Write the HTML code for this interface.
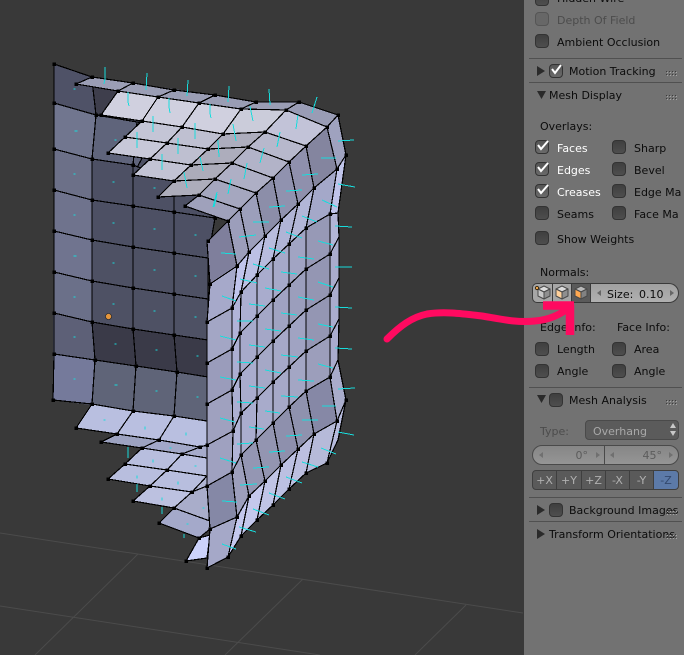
<!DOCTYPE html>
<html><head><meta charset="utf-8"><style>
html,body{margin:0;padding:0;background:#393939}
#r{position:relative;width:684px;height:655px;overflow:hidden;background:#393939;font-family:"DejaVu Sans",sans-serif;font-size:11px;color:#000}
#p{position:absolute;left:524px;top:0;width:160px;height:655px;background:#727272}
.t{position:absolute;line-height:14px;height:14px;white-space:nowrap;margin-top:1px;color:#0c0c0c}
.t.w{color:#fff}.t.d{color:#4c4c4c}
.c{position:absolute;width:12px;height:12px;border:1px solid #333;border-radius:4px;background:linear-gradient(#3f3f3f,#4e4e4e)}
.c.o{background:linear-gradient(#555,#6a6a6a)}
.c.x{background:#676767;border-color:#555}
.s{position:absolute;left:529px;width:153px;height:1px;background:#505050}
svg{position:absolute;left:0;top:0}
.b{position:absolute;box-sizing:border-box;text-align:center;line-height:19px;height:20px;top:470px;background:#5a5a5a;color:#b0b0b0;border:1px solid #3f3f3f}
</style></head><body><div id="r">
<svg width="684" height="655" viewBox="0 0 684 655">
<g stroke="#4b4b4b" fill="none" stroke-width="1">
<path d="M0 533L523 613M0 606L320 655M138 554L35 655M303 579L225 655M466 605L415 655"/>
</g>
<g shape-rendering="crispEdges" stroke="#000" stroke-width="1.200" stroke-linejoin="round">
<polygon fill="#4d5064" stroke="none" points="54,64 92,77 215,95 215,218 208,241 207,421 53,400"/>
<polygon fill="#4f5267" points="54,64 92,77 96,115 54,103"/>
<polygon fill="#3e3e4c" points="92,80 118,91 101,115 96,115"/>
<polygon fill="#71768f" points="54,103 96,115 92,159 54,149"/>
<polygon fill="#6c7088" points="54,149 92,159 92,200 54,190"/>
<polygon fill="#6f738d" points="54,190 92,200 92,240 54,231"/>
<polygon fill="#70748f" points="54,231 92,240 92,281 54,272"/>
<polygon fill="#6b7089" points="54,272 92,281 92,322 54,313"/>
<polygon fill="#5d6077" points="54,313 92,322 95,360 54,354"/>
<polygon fill="#757a9b" points="54,354 95,360 92,404 53,400"/>
<polygon fill="#5f647b" points="96,115 137,122 133,165 92,159"/>
<polygon fill="#5f647b" points="137,122 160,125 133,175 133,165"/>
<polygon fill="#4d5064" points="92,159 133,165 133,206 92,200"/>
<polygon fill="#4d5064" points="133,165 174,181 174,212 133,206"/>
<polygon fill="#4d5064" points="174,181 215,179 215,218 174,212"/>
<polygon fill="#4d5064" points="92,200 133,206 133,247 92,240"/>
<polygon fill="#4d5064" points="133,206 174,212 174,253 133,247"/>
<polygon fill="#4d5064" points="174,212 215,218 208,258 174,253"/>
<polygon fill="#4e5164" points="92,240 133,247 133,288 92,281"/>
<polygon fill="#4e5164" points="133,247 174,253 174,294 133,288"/>
<polygon fill="#4e5164" points="174,253 208,258 208,299 174,294"/>
<polygon fill="#4e5164" points="92,281 133,288 133,329 92,322"/>
<polygon fill="#4e5164" points="133,288 174,294 174,335 133,329"/>
<polygon fill="#4e5164" points="174,294 208,299 208,340 174,335"/>
<polygon fill="#3a3a48" points="92,322 133,329 136,366 95,360"/>
<polygon fill="#3a3a48" points="133,329 174,335 177,372 136,366"/>
<polygon fill="#3a3a48" points="174,335 208,340 208,377 177,372"/>
<polygon fill="#5f6478" points="95,360 136,366 133,411 92,404"/>
<polygon fill="#5f6478" points="136,366 177,372 174,416 133,411"/>
<polygon fill="#5f6478" points="177,372 208,377 207,421 174,416"/>
<!-- top sheet -->
<polygon fill="#9b9eb5" points="76,84 92,77 133,83 118,91"/>
<polygon fill="#9b9eb5" points="118,91 133,83 174,90 158,97"/>
<polygon fill="#9a9db4" points="158,97 174,90 215,95 199,103"/>
<polygon fill="#9a9db4" points="199,103 215,95 256,102 241,109"/>
<polygon fill="#9a9db4" points="241,109 256,102 299,102 286,110"/>
<polygon fill="#999cb5" points="286,110 299,102 338,115 327,127"/>
<polygon fill="#d0d0df" points="101,115 118,91 158,97 142,121"/>
<polygon fill="#d0d0df" points="142,121 158,97 199,103 182,127"/>
<polygon fill="#d0d0df" points="182,127 199,103 241,109 223,134"/>
<polygon fill="#cbccda" points="223,134 241,109 286,110 265,132"/>
<polygon fill="#c2c3d8" points="265,132 286,110 327,127 306,146"/>
<polygon fill="#c4c5d6" points="125,137 142,121 182,127 167,143"/>
<polygon fill="#bfc0d1" points="167,143 182,127 223,134 208,149"/>
<polygon fill="#adadbd" points="208,149 223,134 265,132 248,147"/>
<polygon fill="#b7b8cc" points="248,147 265,132 306,146 289,162"/>
<polygon fill="#c7c8d8" points="108,153 125,137 167,143 150,159"/>
<polygon fill="#bebfd0" points="150,159 167,143 208,149 191,165"/>
<polygon fill="#adadbc" points="191,165 208,149 248,147 232,163"/>
<polygon fill="#b2b3c8" points="232,163 248,147 289,162 273,178"/>
<polygon fill="#c2c3d4" points="133,175 150,159 191,165 174,181"/>
<polygon fill="#acacba" points="174,181 191,165 232,163 215,179"/>
<polygon fill="#aeafc5" points="215,179 232,163 273,178 256,193"/>
<polygon fill="#adadbb" points="158,197 174,181 215,179 199,195"/>
<polygon fill="#a5a7bf" points="199,195 215,179 256,193 240,209"/>
<polygon fill="#9fa1bb" points="185,206 199,195 240,209 228,221"/>
<!-- bottom sheet -->
<polygon fill="#b9bfe0" points="92,404 133,411 117,434 76,428"/>
<polygon fill="#b9bfe0" points="133,411 174,416 159,440 117,434"/>
<polygon fill="#b9bfe0" points="174,416 207,421 207,445 200,447 159,440"/>
<polygon fill="#9da3c1" points="117,434 159,440 142,448 101,442"/>
<polygon fill="#a2a8c8" points="159,440 200,447 182,454 142,448"/>
<polygon fill="#a6abca" points="200,447 207,445 207,458 182,454"/>
<polygon fill="#b8bede" points="142,448 182,454 167,470 125,464"/>
<polygon fill="#b8bede" points="182,454 207,458 207,476 167,470"/>
<polygon fill="#b8bede" points="125,464 167,470 150,486 108,479"/>
<polygon fill="#b8bede" points="167,470 207,476 192,492 150,486"/>
<polygon fill="#b0b5d4" points="192,492 207,476 207,500"/>
<polygon fill="#bcc1e0" points="150,486 192,492 174,508 133,501"/>
<polygon fill="#a9adca" points="192,492 207,486 210,521 174,508"/>
<polygon fill="#a4a9ca" points="174,508 210,521 210,529 199,538 159,523"/>
<polygon fill="#ccd2fa" points="199,538 210,535 207,558 186,561"/>
<!-- side band 0 -->
<polygon fill="#9fa2bf" points="327,127 338,115 346,155 337,169"/>
<polygon fill="#84859f" points="306,146 327,127 337,169 314,188"/>
<polygon fill="#8f90ad" points="289,162 306,146 314,188 298,204"/>
<polygon fill="#9092af" points="273,178 289,162 298,204 281,220"/>
<polygon fill="#8c8ea9" points="256,193 273,178 281,220 265,236"/>
<polygon fill="#9c9fbb" points="240,209 256,193 265,236 249,252"/>
<polygon fill="#9c9ebb" points="228,221 240,209 249,252 237,266"/>
<polygon fill="#7f7f9c" points="207,242 228,221 237,266 210,284"/>
<!-- band 1 -->
<polygon fill="#c0c4ea" points="337,169 346,155 338,213 330,214"/>
<polygon fill="#a4a8c9" points="314,188 337,169 330,214 306,228"/>
<polygon fill="#b2b6d7" points="298,204 314,188 306,228 289,244"/>
<polygon fill="#b0b4d6" points="281,220 298,204 289,244 273,259"/>
<polygon fill="#b8bcde" points="265,236 281,220 273,259 257,275"/>
<polygon fill="#bcc0e4" points="249,252 265,236 257,275 241,292"/>
<polygon fill="#c0c4ec" points="237,266 249,252 241,292 232,308"/>
<polygon fill="#a6a9ca" points="210,284 237,266 232,308 207,322"/>
<!-- band 2 -->
<polygon fill="#b2b5d6" points="330,214 338,213 339,237 330,254"/>
<polygon fill="#9799b6" points="306,228 330,214 330,254 306,269"/>
<polygon fill="#a1a4c3" points="289,244 306,228 306,269 289,285"/>
<polygon fill="#a6a9c9" points="273,259 289,244 289,285 273,300"/>
<polygon fill="#a9accd" points="257,275 273,259 273,300 257,316"/>
<polygon fill="#acafd1" points="241,292 257,275 257,316 240,333"/>
<polygon fill="#b1b4d8" points="232,308 241,292 240,333 232,349"/>
<polygon fill="#a3a6c5" points="207,322 232,308 232,349 207,363"/>
<!-- band 3 -->
<polygon fill="#aaaccd" points="330,254 339,237 339,278 330,295"/>
<polygon fill="#9496b3" points="306,269 330,254 330,295 306,310"/>
<polygon fill="#9b9ebc" points="289,285 306,269 306,310 289,326"/>
<polygon fill="#a0a3c2" points="273,300 289,285 289,326 273,341"/>
<polygon fill="#a4a7c7" points="257,316 273,300 273,341 257,357"/>
<polygon fill="#a7aacb" points="240,333 257,316 257,357 240,374"/>
<polygon fill="#acafd2" points="232,349 240,333 240,374 232,390"/>
<polygon fill="#9a9cbb" points="207,363 232,349 232,390 207,404"/>
<!-- band 4 -->
<polygon fill="#aaaccd" points="330,295 339,278 339,319 330,336"/>
<polygon fill="#9496b3" points="306,310 330,295 330,336 306,351"/>
<polygon fill="#a0a3c2" points="289,326 306,310 306,351 289,367"/>
<polygon fill="#a6a9c8" points="273,341 289,326 289,367 273,382"/>
<polygon fill="#a5a8c7" points="257,357 273,341 273,382 257,398"/>
<polygon fill="#a9accd" points="240,374 257,357 257,398 241,413"/>
<polygon fill="#acafd2" points="232,390 240,374 241,413 233,431"/>
<polygon fill="#9fa1bf" points="207,404 232,390 233,431 207,445"/>
<!-- band 5 -->
<polygon fill="#aaaccd" points="330,336 339,319 338,360 330,377"/>
<polygon fill="#9c9ebb" points="306,351 330,336 330,377 306,391"/>
<polygon fill="#a3a6c4" points="289,367 306,351 306,391 289,407"/>
<polygon fill="#a6a9c8" points="273,382 289,367 289,407 273,423"/>
<polygon fill="#a8abcb" points="257,398 273,382 273,423 256,440"/>
<polygon fill="#aaadce" points="241,413 257,398 256,440 241,455"/>
<polygon fill="#b0b3d6" points="233,431 241,413 241,455 232,472"/>
<polygon fill="#9fa1c0" points="207,445 233,431 232,472 207,486"/>
<!-- band 6 -->
<polygon fill="#a9accb" points="330,377 338,360 346,400 337,421"/>
<polygon fill="#8688a6" points="306,391 330,377 337,421 314,434"/>
<polygon fill="#8f92ae" points="289,407 306,391 314,434 298,449"/>
<polygon fill="#8e90ad" points="273,423 289,407 298,449 281,465"/>
<polygon fill="#9395b1" points="256,440 273,423 281,465 265,481"/>
<polygon fill="#9496b3" points="241,455 256,440 265,481 249,496"/>
<polygon fill="#9d9fbc" points="232,472 241,455 249,496 237,517"/>
<polygon fill="#8588a6" points="207,486 232,472 237,517 210,529"/>
<!-- band 7 -->
<polygon fill="#b7bbdd" points="337,421 346,400 338,440 327,463"/>
<polygon fill="#b6bad9" points="314,434 337,421 327,463 306,473"/>
<polygon fill="#bcbfe0" points="298,449 314,434 306,473 289,489"/>
<polygon fill="#bcc0e2" points="281,465 298,449 289,489 273,505"/>
<polygon fill="#c0c4e6" points="265,481 281,465 273,505 257,520"/>
<polygon fill="#c4c8ec" points="249,496 265,481 257,520 241,536"/>
<polygon fill="#c4c8ee" points="237,517 249,496 241,536 228,557"/>
<polygon fill="#a5a8c8" points="210,529 237,517 228,557 207,568"/>
</g>
<!-- vertices -->
<path shape-rendering="crispEdges" stroke="#000" stroke-linecap="square" fill="none" style="stroke-width:3.500" d="M54 64h0M54 103h0M54 149h0M54 190h0M54 231h0M54 272h0M54 313h0M54 354h0M53 400h0M92 77h0M96 115h0M92 159h0M92 200h0M92 240h0M92 281h0M92 322h0M95 360h0M92 404h0M133 165h0M133 206h0M133 247h0M133 288h0M133 329h0M136 366h0M133 411h0M174 212h0M174 253h0M174 294h0M174 335h0M177 372h0M174 416h0M208 241h0M210 284h0M207 322h0M207 363h0M207 404h0M207 445h0M207 486h0M210 529h0M207 568h0M76 84h0M133 83h0M174 90h0M215 95h0M256 102h0M299 102h0M338 115h0M118 91h0M158 97h0M199 103h0M241 109h0M286 110h0M327 127h0M101 115h0M142 121h0M182 127h0M223 134h0M265 132h0M306 146h0M125 137h0M167 143h0M208 149h0M248 147h0M289 162h0M108 153h0M150 159h0M191 165h0M232 163h0M273 178h0M133 175h0M174 181h0M215 179h0M256 193h0M158 197h0M199 195h0M240 209h0M185 206h0M228 221h0M215 218h0M76 428h0M117 434h0M159 440h0M200 447h0M101 442h0M142 448h0M182 454h0M125 464h0M167 470h0M108 479h0M150 486h0M192 492h0M133 501h0M174 508h0M159 523h0M199 538h0M186 561h0M346 155h0M337 169h0M314 188h0M298 204h0M281 220h0M265 236h0M249 252h0M237 266h0M330 214h0M306 228h0M289 244h0M273 259h0M257 275h0M241 292h0M232 308h0M330 254h0M306 269h0M289 285h0M273 300h0M257 316h0M240 333h0M232 349h0M330 295h0M306 310h0M289 326h0M273 341h0M257 357h0M240 374h0M232 390h0M330 336h0M306 351h0M289 367h0M273 382h0M257 398h0M241 413h0M233 431h0M330 377h0M306 391h0M289 407h0M273 423h0M256 440h0M241 455h0M232 472h0M337 421h0M346 400h0M314 434h0M298 449h0M281 465h0M265 481h0M249 496h0M237 517h0M327 463h0M306 473h0M289 489h0M273 505h0M257 520h0M241 536h0M228 557h0"/>
<!-- normals -->
<path shape-rendering="crispEdges" stroke="#18dcdc" stroke-width="1" fill="none" d="M105 67V79L104 84M147 73L146 90M188 80L187 96M128 92V102L129 106M169 98V107L170 113M210 104V113L211 118M153 116V132M195 123V139M137 132V148M178 138V154M218 140L219 157M162 154V170M200 157L203 171M184 172L187 188M217 194L214 207M229 86L228 102M269 89L270 105M317 97L312 113M250 106L253 121M298 115L296 129M233 124L236 141M280 132L277 147M264 148L260 163M247 163L244 179M231 179L228 194M217 192L213 207M338 141L354 140M321 158H336M302 175L318 174M286 191L302 190M269 207L285 206M253 222H269M239 237L256 235M221 253L236 254M338 184L355 187M322 200L337 207M302 216L317 222M286 232L302 238M269 248L285 253M335 226L352 227M318 241L333 245M298 257L314 259M253 264L269 269M281 272L297 274M240 279L257 283M265 288L281 291M318 282L333 287M222 296L236 301M249 304L265 306M298 297L314 300M281 313L297 315M335 267H352M335 307L352 308M318 324L333 327M237 321H253M265 329L281 331M220 336L236 340M298 338L314 340M249 345L265 347M281 355L298 357M335 348L352 349M318 364L333 368M237 362L253 363M265 370L281 373M298 380L314 381M220 377L236 380M249 386L265 388M281 396L298 397M338 389L355 388M322 406H336M237 402L253 403M265 411L280 413M302 420H318M220 418L235 422M249 427L264 429M338 432L354 435M286 436L302 435M237 444L253 443M269 452L285 451M321 448L336 454M220 458L236 463M253 468L269 467M302 462L318 467M240 485L257 484M286 477L302 483M222 501L237 502M269 493L285 499M253 509L269 515M239 527L256 532M222 544L236 549M128 447V458M137 484V492M162 507V514M184 534V538"/>
<path shape-rendering="crispEdges" stroke="#18dcdc" stroke-linecap="square" fill="none" style="stroke-width:1" d="M74 89h1M75 131h2M74 174h1M74 215h1M113 182h1M113 223h1M154 188h1M154 229h1M115 140h1M74 256h2M74 297h1M74 337h1M74 379h1M113 263h1M113 304h1M154 270h1M154 311h1M195 235h1M195 276h1M195 317h1M115 344h1M156 350h1M197 356h1M115 385h2M156 391h1M197 397h1M104 420h1M145 427v2M186 433v2M170 448h1M153 460v2M195 466h1M137 476v2M178 482v2M162 498v2M203 508h1M187 524h1"/>
<!-- active vertex -->
<circle cx="108.500" cy="316.500" r="3" fill="#e6963c" stroke="#222" stroke-width=".6"/>
</svg>
<div id="p"></div>
<div class="c" style="left:535px;top:-8px"></div><div class="t" style="left:557px;top:-9px">Hidden Wire</div>
<div class="c x" style="left:535px;top:12px"></div><div class="t d" style="left:557px;top:13px">Depth Of Field</div>
<div class="c" style="left:535px;top:34px"></div><div class="t" style="left:557px;top:35px">Ambient Occlusion</div>
<div class="s" style="top:58px"></div>
<div class="c o" style="left:549px;top:64px"></div><div class="t" style="left:569px;top:64px">Motion Tracking</div>
<div class="s" style="top:82px"></div>
<div class="t" style="left:549px;top:88px">Mesh Display</div>
<div class="t" style="left:540px;top:119px">Overlays:</div>
<div class="c o" style="left:535px;top:140px"></div><div class="t w" style="left:557px;top:141px">Faces</div>
<div class="c o" style="left:535px;top:162px"></div><div class="t w" style="left:557px;top:163px">Edges</div>
<div class="c o" style="left:535px;top:184px"></div><div class="t w" style="left:557px;top:185px">Creases</div>
<div class="c" style="left:535px;top:206px"></div><div class="t" style="left:557px;top:207px">Seams</div>
<div class="c" style="left:612px;top:140px"></div><div class="t" style="left:634px;top:141px">Sharp</div>
<div class="c" style="left:612px;top:162px"></div><div class="t" style="left:634px;top:163px">Bevel</div>
<div class="c" style="left:612px;top:184px"></div><div class="t" style="left:634px;top:185px">Edge Ma</div>
<div class="c" style="left:612px;top:206px"></div><div class="t" style="left:634px;top:207px">Face Ma</div>
<div class="c" style="left:535px;top:231px"></div><div class="t" style="left:557px;top:232px">Show Weights</div>
<div class="t" style="left:540px;top:265px">Normals:</div>
<div style="position:absolute;left:532px;top:283px;width:20px;height:20px;box-sizing:border-box;border:1px solid #3a3a3a;border-right:0;border-radius:5px 0 0 5px;background:#a6a6a6"></div>
<div style="position:absolute;left:552px;top:283px;width:19px;height:20px;box-sizing:border-box;border:1px solid #3a3a3a;border-right:0;background:#a6a6a6"></div>
<div style="position:absolute;left:571px;top:283px;width:20px;height:20px;box-sizing:border-box;border:1px solid #3a3a3a;background:#5a5a5a"></div>
<div style="position:absolute;left:591px;top:283px;width:88px;height:20px;box-sizing:border-box;border:1px solid #3a3a3a;border-left:0;border-radius:0 10px 10px 0;background:linear-gradient(#a0a0a0,#b0b0b0)"></div>
<div class="t" style="left:607px;top:287px">Size:</div><div class="t" style="left:639px;top:287px">0.10</div>
<div class="t" style="left:540px;top:320px">Edge Info:</div><div class="t" style="left:617px;top:320px">Face Info:</div>
<div class="c" style="left:535px;top:342px"></div><div class="t" style="left:557px;top:342px">Length</div>
<div class="c" style="left:612px;top:342px"></div><div class="t" style="left:634px;top:342px">Area</div>
<div class="c" style="left:535px;top:364px"></div><div class="t" style="left:557px;top:364px">Angle</div>
<div class="c" style="left:612px;top:364px"></div><div class="t" style="left:634px;top:364px">Angle</div>
<div class="s" style="top:387px"></div>
<div class="c" style="left:549px;top:393px"></div><div class="t" style="left:569px;top:393px">Mesh Analysis</div>
<div class="t d" style="left:540px;top:424px">Type:</div>
<div style="position:absolute;left:585px;top:420px;width:94px;height:20px;box-sizing:border-box;border:1px solid #4a4a4a;border-radius:4px;background:#5b5b5b"></div>
<div class="t" style="left:593px;top:424px;color:#a8a8a8">Overhang</div>
<div style="position:absolute;left:532px;top:445px;width:147px;height:20px;box-sizing:border-box;border:1px solid #4a4a4a;border-radius:10px;background:linear-gradient(#868686,#959595)"></div>
<div style="position:absolute;left:604px;top:446px;width:1px;height:18px;background:#4a4a4a"></div>
<div class="t" style="left:568px;top:448px;color:#5c5c5c;width:20px;text-align:right">0°</div>
<div class="t" style="left:638px;top:448px;color:#5c5c5c;width:24px;text-align:right">45°</div>
<div class="b" style="left:532px;width:25px;border-radius:4px 0 0 4px">+X</div>
<div class="b" style="left:556px;width:26px">+Y</div>
<div class="b" style="left:581px;width:25px">+Z</div>
<div class="b" style="left:605px;width:25px">-X</div>
<div class="b" style="left:629px;width:25px">-Y</div>
<div class="b" style="left:653px;width:26px;border-radius:0 4px 4px 0;background:#5c7aa8;color:#33496d">-Z</div>
<div class="s" style="top:497px"></div>
<div class="c" style="left:549px;top:503px"></div><div class="t" style="left:569px;top:503px">Background Images</div>
<div class="s" style="top:521px"></div>
<div class="t" style="left:549px;top:527px">Transform Orientations</div>
<svg width="684" height="655" viewBox="0 0 684 655">
<!-- triangles -->
<g fill="#2a2a2a">
<path d="M537 66L545 71L537 76Z"/><path d="M537 91H546L541.500 99Z"/>
<path d="M537 395H546L541.500 403Z"/><path d="M537 505L545 510L537 515Z"/><path d="M537 529L545 534L537 539Z"/>
</g>
<!-- checks -->
<g fill="none" stroke="#fff" stroke-width="2">
<path d="M552 69L555 73L561 65"/><path d="M538 145L541 149L548 141"/><path d="M538 167L541 171L548 163"/><path d="M538 189L541 193L548 185"/>
</g>
<!-- grips -->
<g fill="none" stroke-width="1" stroke-dasharray="1 2">
<path stroke="#3d3d3d" d="M666 71.500H677M666 74.500H677M666 95.500H677M666 98.500H677M666 400.500H677M666 403.500H677M666 510.500H677M666 513.500H677M666 534.500H677M666 537.500H677"/>
<path stroke="#a5a5a5" d="M667 72.500H678M667 75.500H678M667 96.500H678M667 99.500H678M667 401.500H678M667 404.500H678M667 511.500H678M667 514.500H678M667 535.500H678M667 538.500H678"/>
</g>
<!-- field arrows -->
<g fill="#666"><path d="M601 290L597 293L601 296Z"/><path d="M670 290L674 293L670 296Z"/></g>
<g fill="#707070"><path d="M543 452L539 455L543 458Z"/><path d="M596 452L600 455L596 458Z"/><path d="M614 452L610 455L614 458Z"/><path d="M669 452L673 455L669 458Z"/></g>
<g fill="#c8c8c8"><path d="M670 428L673 423L676 428Z"/><path d="M670 431L673 436L676 431Z"/></g>
<!-- cube icons -->
<g stroke="#4a4a4a" stroke-width="1" stroke-linejoin="round">
<path fill="#dcdcdc" d="M544 286L550 289L544 292L538 289Z"/><path fill="#c8c8c8" d="M538 289L544 292V299L538 296Z"/><path fill="#8f8f8f" d="M544 292L550 289V296L544 299Z"/>
<circle cx="537" cy="288" r="1.600" fill="#ffb050" stroke="#3a2a10"/>
<path fill="#dcdcdc" d="M562 286L568 289L562 292L556 289Z"/><path fill="#ffd09a" d="M556 289L562 292V299L556 296Z"/><path fill="#8f8f8f" d="M562 292L568 289V296L562 299Z"/>
<path fill="#b9b9b9" d="M581 286L587 289L581 292L575 289Z"/><path fill="#ffa850" d="M575 289L581 292V299L575 296Z"/><path fill="#828282" d="M581 292L587 289V296L581 299Z"/>
</g>
<!-- pink arrow -->
<g fill="none" stroke="#ff0a60">
<path stroke-width="7" stroke-linecap="round" d="M387 339C400 326 412 317 427 314C445 311 465 314 482 316C500 319 517 323 535 321C548 320 560 315 570 307"/>
<path stroke-width="8.500" d="M543 305.500H574M570 305V335"/>
</g>
</svg>
</div></body></html>
